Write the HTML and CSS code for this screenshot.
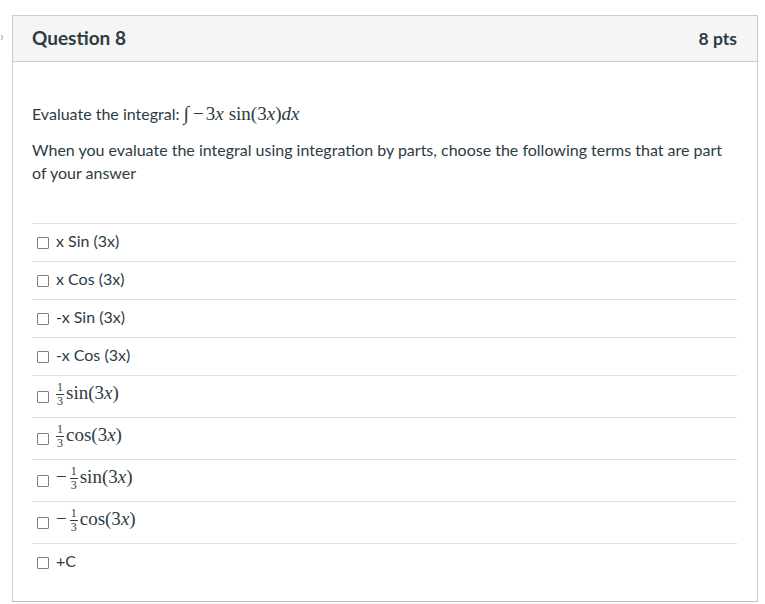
FILE: index.html
```html
<!DOCTYPE html>
<html>
<head>
<meta charset="utf-8">
<link rel="stylesheet" href="styles.css">
</head>
<body>
<div class="page">
  <div class="gutter"><span class="chev">›</span></div>
  <div class="card">
    <div class="head">
      <div class="title">Question 8</div>
      <div class="pts">8 pts</div>
    </div>
    <div class="content">
      <p class="q1">Evaluate the integral: <span class="math"><span class="int">∫</span><span class="op">−</span>3<i>x</i><span class="sp"></span>sin(3<i>x</i>)<i>dx</i></span></p>
      <p class="q2">When you evaluate the integral using integration by parts, choose the following terms that are part of your answer</p>
      <div class="answers">
        <div class="row"><span class="box"></span><span class="lbl">x Sin (3x)</span></div>
        <div class="row"><span class="box"></span><span class="lbl">x Cos (3x)</span></div>
        <div class="row"><span class="box"></span><span class="lbl">-x Sin (3x)</span></div>
        <div class="row"><span class="box"></span><span class="lbl">-x Cos (3x)</span></div>
        <div class="row mrow"><span class="box"></span><span class="math big"><span class="frac"><span class="num">1</span><span class="den">3</span></span>sin(3<i>x</i>)</span></div>
        <div class="row mrow"><span class="box"></span><span class="math big"><span class="frac"><span class="num">1</span><span class="den">3</span></span>cos(3<i>x</i>)</span></div>
        <div class="row mrow"><span class="box"></span><span class="math big"><span class="minus">−</span><span class="frac"><span class="num">1</span><span class="den">3</span></span>sin(3<i>x</i>)</span></div>
        <div class="row mrow"><span class="box"></span><span class="math big"><span class="minus">−</span><span class="frac"><span class="num">1</span><span class="den">3</span></span>cos(3<i>x</i>)</span></div>
        <div class="row last"><span class="box"></span><span class="lbl">+C</span></div>
      </div>
    </div>
  </div>
</div>
</body>
</html>
```

FILE: styles.css
```css
html, body {
  margin: 0;
  padding: 0;
  background: #ffffff;
}
body {
  font-family: Lato, "Liberation Sans", sans-serif;
  color: #2d3b45;
}
.page {
  display: flex;
  padding-top: 15px;
}
.gutter {
  width: 12px;
  flex: none;
}
.chev {
  display: block;
  margin-top: 11px;
  margin-left: 0px;
  font-size: 14px;
  line-height: 20px;
  color: #a0a7ad;
}
.card {
  width: 744px;
  border: 1px solid #c7cdd1;
  border-bottom-color: #b8bec2;
}
.head {
  height: 45px;
  background: #f5f5f5;
  border-bottom: 1px solid #c7cdd1;
  display: flex;
  align-items: center;
  justify-content: space-between;
  padding: 0 20px 0 19px;
}
.title {
  font-size: 19px;
  font-weight: 700;
  margin-top: -2px;
}
.pts {
  font-size: 17.5px;
  font-weight: 700;
  margin-top: -1px;
}
.content {
  padding: 40px 20px 20px 19px;
}
p {
  margin: 0;
  font-size: 16px;
  line-height: 23px;
}
.q1 {
  height: 24px;
}
.q2 {
  margin-top: 12px;
  margin-bottom: 39px;
}
.math {
  font-family: "Liberation Serif", "DejaVu Serif", serif;
  font-size: 19px;
  display: inline-block;
  white-space: nowrap;
}
.math.big {
  font-size: 19px;
  margin-top: -4px;
}
.math i {
  font-style: italic;
}
.int {
  display: inline-block;
  font-style: italic;
  font-size: 20px;
  margin-right: 4px;
}
.op {
  margin-right: 2px;
}
.sp {
  display: inline-block;
  width: 5px;
}
.answers {
  border-top: 1px solid #dde1e4;
}
.row {
  height: 37px;
  border-bottom: 1px solid #dde1e4;
  display: flex;
  align-items: center;
  padding-left: 5px;
  font-size: 16px;
}
.row.mrow {
  height: 41px;
}
.row.last {
  border-bottom: none;
}
.box {
  width: 10px;
  height: 10px;
  border: 1.5px solid #808080;
  border-radius: 1px;
  margin-right: 7px;
  flex: none;
}
.lbl {
  line-height: 20px;
  margin-top: -4px;
}
.frac {
  display: inline-flex;
  flex-direction: column;
  align-items: center;
  vertical-align: middle;
  font-size: 12px;
  line-height: 11px;
  margin-right: 2px;
  margin-top: -2px;
}
.num {
  border-bottom: 1px solid #2d3b45;
  padding: 0 1px 1px;
}
.den {
  padding-top: 1px;
}
.minus {
  margin-right: 3px;
}
```
